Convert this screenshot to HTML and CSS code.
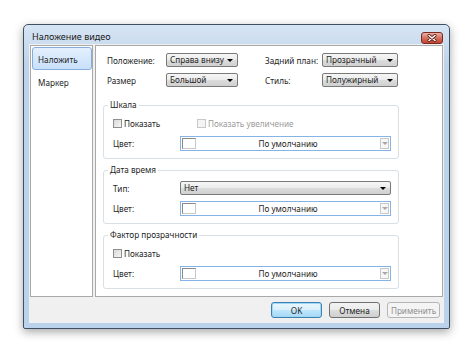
FILE: index.html
```html
<!DOCTYPE html>
<html lang="ru">
<head>
<meta charset="utf-8">
<title>Наложение видео</title>
<link rel="stylesheet" href="styles.css">
</head>
<body>
<div class="window">
  <div class="titlebar">
    <span class="title">Наложение видео</span>
    <span class="close"><svg width="10" height="8" viewBox="0 0 10 8"><path d="M2 1.5 L8 6.5 M8 1.5 L2 6.5" stroke="#5a1a14" stroke-width="3" stroke-linecap="round"/><path d="M2 1.5 L8 6.5 M8 1.5 L2 6.5" stroke="#ffffff" stroke-width="1.6" stroke-linecap="round"/></svg></span>
  </div>
  <div class="client">
    <div class="body">
      <nav class="nav">
        <div class="nav-item selected">Наложить</div>
        <div class="nav-item">Маркер</div>
      </nav>
      <main class="panel">
        <div class="top-grid">
          <span class="lbl">Положение:</span><div class="combo w72">Справа внизу<i class="arrow"></i></div>
          <span class="lbl">Задний план:</span><div class="combo w76">Прозрачный<i class="arrow"></i></div>
          <span class="lbl">Размер</span><div class="combo w72">Большой<i class="arrow"></i></div>
          <span class="lbl">Стиль:</span><div class="combo w76">Полужирный<i class="arrow"></i></div>
        </div>

        <fieldset class="group">
          <legend>Шкала</legend>
          <div class="row">
            <label class="check"><span class="box"></span>Показать</label>
            <label class="check disabled"><span class="box"></span>Показать увеличение</label>
          </div>
          <div class="row">
            <span class="glbl">Цвет:</span>
            <div class="color"><span class="swatch"></span><span class="ctext">По умолчанию</span><span class="cbtn"><i class="arrow gray"></i></span></div>
          </div>
        </fieldset>

        <fieldset class="group">
          <legend>Дата время</legend>
          <div class="row">
            <span class="glbl">Тип:</span>
            <div class="combo wide">Нет<i class="arrow"></i></div>
          </div>
          <div class="row">
            <span class="glbl">Цвет:</span>
            <div class="color"><span class="swatch"></span><span class="ctext">По умолчанию</span><span class="cbtn"><i class="arrow gray"></i></span></div>
          </div>
        </fieldset>

        <fieldset class="group">
          <legend>Фактор прозрачности</legend>
          <div class="row">
            <label class="check"><span class="box"></span>Показать</label>
          </div>
          <div class="row">
            <span class="glbl">Цвет:</span>
            <div class="color"><span class="swatch"></span><span class="ctext">По умолчанию</span><span class="cbtn"><i class="arrow gray"></i></span></div>
          </div>
        </fieldset>
      </main>
    </div>
    <div class="footer">
      <button class="btn default">OK</button>
      <button class="btn">Отмена</button>
      <button class="btn disabled">Применить</button>
    </div>
  </div>
</div>
</body>
</html>
```
FILE: styles.css
```css
* { box-sizing: border-box; }
html, body { margin: 0; padding: 0; background: #ffffff; }
body {
  font-family: "Noto Sans", "DejaVu Sans", sans-serif;
  font-size: 8.2px;
  color: #1e1e1e;
  width: 474px;
  height: 352px;
  overflow: hidden;
}
.window {
  margin: 24px 0 0 23px;
  width: 427px;
  height: 305px;
  border: 1px solid #3f5063;
  border-radius: 5px 5px 2px 2px;
  background: linear-gradient(#d7e5f3, #bcd3eb 40px, #bad2ec);
  box-shadow: 0 3px 10px rgba(0,0,0,0.35);
  display: flex;
  flex-direction: column;
}
.titlebar {
  height: 19px;
  flex: none;
  display: flex;
  align-items: center;
  justify-content: space-between;
  padding: 0 6px 0 8px;
}
.title { font-size: 9px; color: #1a1a1a; margin-top: 3px; }
.close {
  width: 22px;
  height: 12px;
  margin-top: 6px;
  border: 1px solid #7a2a22;
  border-radius: 3px;
  background: linear-gradient(#eab0a6, #d5705f 50%, #c2432f);
  display: flex;
  align-items: center;
  justify-content: center;
}
.client {
  flex: 1;
  margin: 0 5px 5px 5px;
  background: #f0f0f0;
  display: flex;
  flex-direction: column;
  padding: 1px 1px 0 1px;
}
.body {
  height: 252px;
  display: flex;
  gap: 2px;
}
.nav {
  width: 63px;
  background: #ffffff;
  border: 1px solid #a9a9a9;
  padding: 1px 0 0 1px;
}
.nav-item {
  height: 23px;
  line-height: 23px;
  padding-left: 5px;
  border: 1px solid transparent;
  border-radius: 3px;
}
.nav-item.selected {
  background: linear-gradient(#e4f0fc, #c9e0fb);
  border-color: #84acdd;
}
.panel {
  flex: 1;
  background: #ffffff;
  border: 1px solid #a9a9a9;
  padding: 7px 0 0 7px;
}
.top-grid {
  display: grid;
  grid-template-columns: 59px 99px 57px 76px;
  grid-auto-rows: 14px;
  row-gap: 6px;
  align-items: center;
  margin-left: 4px;
}
.lbl { white-space: nowrap; }
.combo {
  height: 14px;
  line-height: 12px;
  padding-left: 3px;
  border: 1px solid #7a7a7a;
  border-radius: 2px;
  background: linear-gradient(#f6f6f6, #ebebeb 50%, #dcdcdc 51%, #d0d0d0);
  white-space: nowrap;
  display: flex;
  align-items: center;
}
.w72 { width: 72px; }
.w76 { width: 76px; }
.combo.wide { width: 211px; }
.arrow {
  flex: none;
  margin-left: auto;
  margin-right: 4px;
  width: 0;
  height: 0;
  border-left: 3px solid transparent;
  border-right: 3px solid transparent;
  border-top: 3px solid #000000;
}
.arrow.gray { border-top-color: #a8a8a8; margin: 0; }
.group {
  width: 295px;
  margin: 0;
  border: 1px solid #d8dfe5;
  border-radius: 3px;
  padding: 5px 7px 8px 9px;
}
.top-grid + .group { margin-top: 12px; }
.group + .group { margin-top: 5px; }
legend {
  padding: 0 2px;
  margin-left: -5px;
  line-height: 12px;
  color: #1e1e1e;
}
.row {
  height: 14px;
  display: flex;
  align-items: center;
}
.row + .row { margin-top: 6px; }
.check {
  display: flex;
  align-items: center;
  width: 84px;
  flex: none;
  white-space: nowrap;
}
.check .box {
  flex: none;
  width: 9px;
  height: 9px;
  margin-right: 2px;
  border: 1px solid #8f8f8f;
  background: linear-gradient(135deg, #d8d8d8, #f6f6f6);
}
.check.disabled { color: #9c9c9c; width: auto; }
.check.disabled .box { border-color: #c8c8c8; background: #f4f4f4; }
.glbl { width: 67px; flex: none; }
.color {
  width: 211px;
  height: 15px;
  border: 1px solid #86b4e6;
  background: #ffffff;
  display: flex;
  align-items: stretch;
  padding: 1px;
}
.swatch {
  width: 14px;
  flex: none;
  border: 1px solid #8a8a8a;
  border-right-color: #c8c8c8;
  border-bottom-color: #c8c8c8;
  background: #ffffff;
}
.ctext {
  flex: 1;
  text-align: center;
  line-height: 11px;
  white-space: nowrap;
}
.cbtn {
  width: 9px;
  flex: none;
  border: 1px solid #c9c9c9;
  background: #f7f7f7;
  display: flex;
  align-items: center;
  justify-content: center;
}
.footer {
  flex: 1;
  display: flex;
  justify-content: flex-end;
  align-items: flex-start;
  gap: 7px;
  padding: 5px 3px 0 0;
}
.btn {
  font-family: inherit;
  font-size: 8.2px;
  width: 51px;
  height: 16px;
  padding: 0;
  border: 1px solid #707070;
  border-radius: 3px;
  background: linear-gradient(#f3f3f3, #ebebeb 50%, #dddddd 51%, #cfcfcf);
  color: #1e1e1e;
}
.btn.default {
  border-color: #3c7fb1;
  box-shadow: inset 0 0 0 1px #9fd8f4;
  background: linear-gradient(#eaf6fd, #d9f0fc 50%, #bee6fd 51%, #a7d9f5);
}
.btn.disabled {
  width: 53px;
  color: #8d8d8d;
  border-color: #b5b5b5;
  background: #f4f4f4;
}
```
